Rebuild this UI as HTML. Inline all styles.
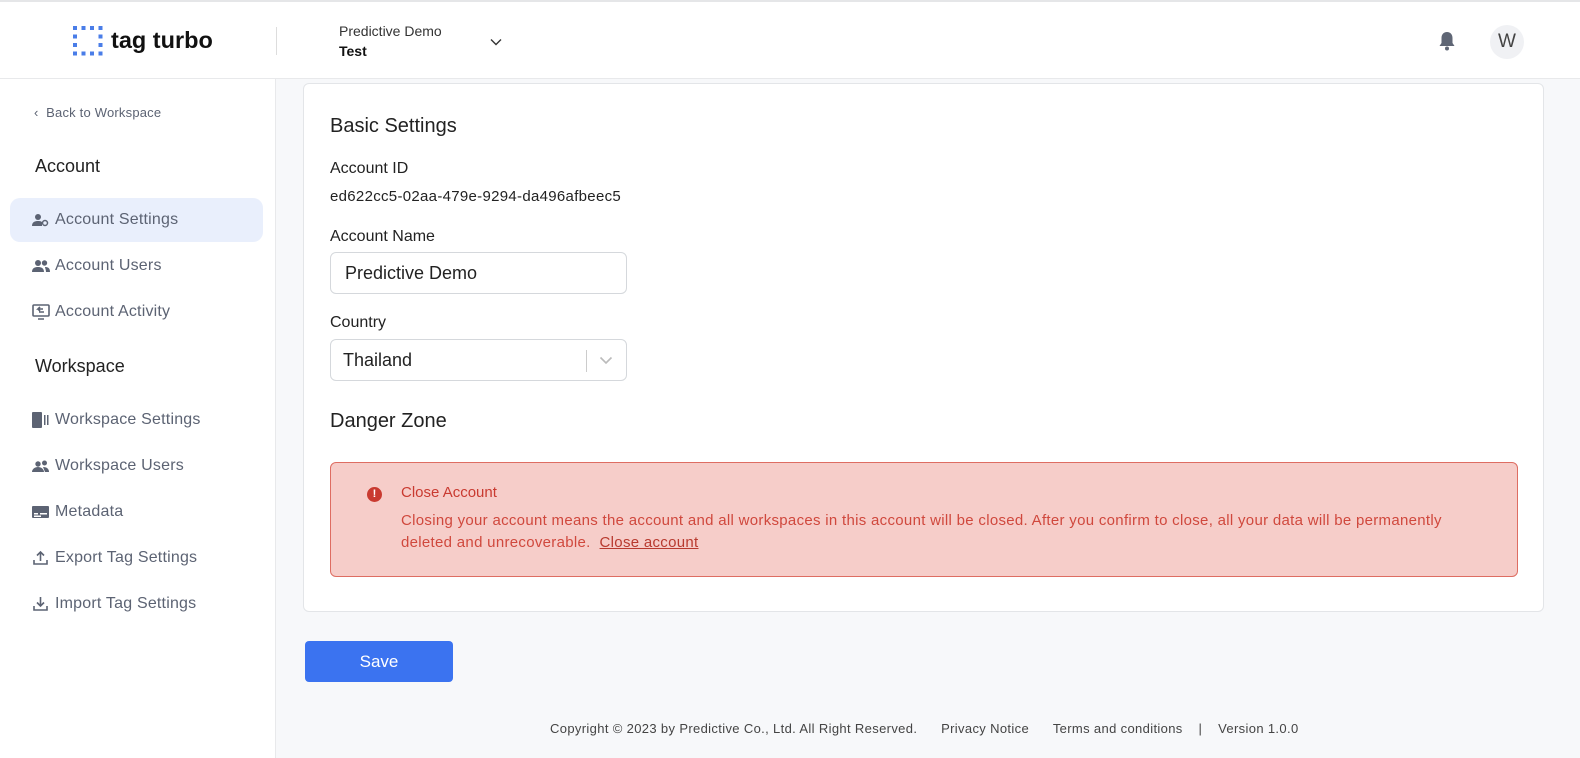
<!DOCTYPE html>
<html><head><style>
*{box-sizing:border-box;margin:0;padding:0}
body{width:1580px;height:758px;overflow:hidden;font-family:"Liberation Sans",sans-serif;background:#f7f8fa;position:relative;color:#1f2328}
.hdr{position:absolute;left:0;top:0;width:1580px;height:79px;background:#fff;border-top:2px solid #e5e6e8;border-bottom:1px solid #e8e9eb}
.side{position:absolute;left:0;top:79px;width:276px;height:679px;background:#fff;border-right:1px solid #e8e9eb}
.abs{position:absolute}
.nav{position:absolute;left:10px;width:253px;height:44px;display:flex;align-items:center;padding-left:22px;font-size:16px;letter-spacing:0.2px;color:#5c6373;border-radius:10px}
.nav svg{margin-right:5px}
.card{position:absolute;left:303px;top:83px;width:1241px;height:529px;background:#fff;border:1px solid #e3e5e8;border-radius:6px}
.inp{position:absolute;width:297px;height:42px;border:1px solid #d5d8dc;border-radius:6px;font-size:18px;color:#222;display:flex;align-items:center}
</style></head><body>
<div class="hdr">
 <svg class="abs" style="left:73px;top:24px" width="30" height="30" viewBox="0 0 30 30" fill="#4a7de8">
  <rect x="0" y="0" width="4" height="4"/><rect x="8.5" y="0" width="4" height="4"/><rect x="17" y="0" width="4" height="4"/><rect x="25.5" y="0" width="4" height="4"/>
  <rect x="0" y="8.5" width="4" height="4"/><rect x="25.5" y="8.5" width="4" height="4"/>
  <rect x="0" y="17" width="4" height="4"/><rect x="25.5" y="17" width="4" height="4"/>
  <rect x="0" y="25.5" width="4" height="4"/><rect x="8.5" y="25.5" width="4" height="4"/><rect x="17" y="25.5" width="4" height="4"/><rect x="25.5" y="25.5" width="4" height="4"/>
 </svg>
 <div class="abs" style="left:111px;top:25px;font-size:23.5px;font-weight:bold;color:#111">tag turbo</div>
 <div class="abs" style="left:276px;top:25px;width:1px;height:28px;background:#ddd"></div>
 <div class="abs" style="left:339px;top:21px;font-size:14px;color:#333">Predictive Demo</div>
 <div class="abs" style="left:339px;top:41px;font-size:14px;color:#111;font-weight:bold">Test</div>
 <svg class="abs" style="left:490px;top:36px" width="12" height="8" viewBox="0 0 12 8"><path d="M1 1.5l5 5 5-5" stroke="#333" stroke-width="1.4" fill="none"/></svg>
 <svg class="abs" style="left:1438px;top:29px" width="18" height="20" viewBox="0 0 18 20" fill="#5f6675"><path d="M9 1c-3.5 0-5.5 2.5-5.5 6v5L1.5 15h15l-2-3V7C14.5 3.5 12.5 1 9 1z"/><circle cx="9" cy="17.5" r="2"/></svg>
 <div class="abs" style="left:1490px;top:23px;width:34px;height:34px;border-radius:50%;background:#f0f1f4;font-size:19px;color:#444;text-align:center;line-height:34px">W</div>
</div>
<div class="side">
 <div class="abs" style="left:34px;top:26px;font-size:13px;color:#5c6373;letter-spacing:0.2px">‹&nbsp;&nbsp;Back to Workspace</div>
 <div class="abs" style="left:35px;top:77px;font-size:18px;color:#222">Account</div>
 <div class="nav" style="top:119px;background:#e9effc"><svg width="18" height="14" viewBox="0 0 18 14" fill="#5c6373"><circle cx="6" cy="4" r="3"/><path d="M0 13c0-4 3-5 6-5s3 .5 4 1v4z"/><circle cx="13" cy="10" r="2.5" fill="none" stroke="#5c6373" stroke-width="1.5"/></svg>Account Settings</div>
 <div class="nav" style="top:165px"><svg width="18" height="14" viewBox="0 0 18 14" fill="#5c6373"><circle cx="6" cy="4" r="3"/><circle cx="12.5" cy="4" r="2.7"/><path d="M0 13c0-4 3-5 6-5s6 1 6 5zM13 8c3 0 5 1 5 5h-4c0-2-1-4-1-5z"/></svg>Account Users</div>
 <div class="nav" style="top:211px"><svg width="18" height="16" viewBox="0 0 18 16" fill="none" stroke="#5c6373" stroke-width="1.6"><rect x="1" y="1" width="16" height="11" rx="1"/><path d="M6 15h6M11 5H6l2-2M6 5l2 2M7 8h5"/></svg>Account Activity</div>
 <div class="abs" style="left:35px;top:277px;font-size:18px;color:#222">Workspace</div>
 <div class="nav" style="top:319px"><svg width="18" height="16" viewBox="0 0 18 16" fill="#5c6373"><rect x="0" y="0" width="10" height="16" rx="1"/><rect x="12" y="3" width="1.5" height="10"/><rect x="15" y="3" width="1.5" height="10"/></svg>Workspace Settings</div>
 <div class="nav" style="top:365px"><svg width="18" height="14" viewBox="0 0 18 14" fill="#5c6373"><circle cx="6" cy="5" r="2.7"/><circle cx="12.5" cy="4" r="2.5"/><path d="M0 13c0-3 3-5 6-5s6 2 6 5zM11 8c4 0 6 2 6 5h-4z"/></svg>Workspace Users</div>
 <div class="nav" style="top:411px"><svg width="18" height="14" viewBox="0 0 18 14" fill="#5c6373"><rect x="0" y="1" width="17" height="12" rx="1"/><rect x="2" y="8" width="4" height="1.5" fill="#fff"/><rect x="8" y="8" width="7" height="1.5" fill="#fff"/><rect x="2" y="10.5" width="7" height="1.5" fill="#fff"/></svg>Metadata</div>
 <div class="nav" style="top:457px"><svg width="18" height="16" viewBox="0 0 18 16" fill="none" stroke="#5c6373" stroke-width="1.6"><path d="M2 10v4h13v-4M8.5 11V2M5 5.5l3.5-3.5 3.5 3.5"/></svg>Export Tag Settings</div>
 <div class="nav" style="top:503px"><svg width="18" height="16" viewBox="0 0 18 16" fill="none" stroke="#5c6373" stroke-width="1.6"><path d="M2 10v4h13v-4M8.5 1v9M5 6.5l3.5 3.5 3.5-3.5"/></svg>Import Tag Settings</div>
</div>
<div class="card">
 <div class="abs" style="left:26px;top:31px;font-size:20px;color:#222">Basic Settings</div>
 <div class="abs" style="left:26px;top:76px;font-size:16px;color:#222">Account ID</div>
 <div class="abs" style="left:26px;top:104px;font-size:15px;color:#222;letter-spacing:0.3px">ed622cc5-02aa-479e-9294-da496afbeec5</div>
 <div class="abs" style="left:26px;top:144px;font-size:16px;color:#222">Account Name</div>
 <div class="inp" style="left:26px;top:168px;padding-left:14px">Predictive Demo</div>
 <div class="abs" style="left:26px;top:230px;font-size:16px;color:#222">Country</div>
 <div class="inp" style="left:26px;top:255px;padding-left:12px">Thailand
  <div class="abs" style="left:255px;top:10px;width:1px;height:22px;background:#ccc"></div>
  <svg class="abs" style="left:268px;top:16px" width="14" height="9" viewBox="0 0 14 9"><path d="M1.5 1.5l5.5 5.5 5.5-5.5" stroke="#bbb" stroke-width="1.6" fill="none"/></svg>
 </div>
 <div class="abs" style="left:26px;top:326px;font-size:20px;color:#222">Danger Zone</div>
 <div class="abs" style="left:26px;top:378px;width:1188px;height:115px;background:#f6cdc9;border:1px solid #de6d62;border-radius:6px">
  <div class="abs" style="left:36px;top:24px;width:15px;height:15px;border-radius:50%;background:#c93a30;color:#fff;font-size:11px;font-weight:bold;text-align:center;line-height:15px">!</div>
  <div class="abs" style="left:70px;top:21px;font-size:15px;color:#c93a30">Close Account</div>
  <div class="abs" style="left:70px;top:47px;width:1080px;font-size:15px;line-height:22px;letter-spacing:0.3px;color:#d0483d">Closing your account means the account and all workspaces in this account will be closed. After you confirm to close, all your data will be permanently deleted and unrecoverable.&nbsp; <u style="color:#b83a2f">Close account</u></div>
 </div>
</div>
<div class="abs" style="left:305px;top:641px;width:148px;height:41px;background:#3b73f0;border-radius:4px;color:#fff;font-size:17px;text-align:center;line-height:41px">Save</div>
<div class="abs" style="left:550px;top:721px;font-size:13px;color:#444;white-space:nowrap;letter-spacing:0.35px">Copyright © 2023 by Predictive Co., Ltd. All Right Reserved.&nbsp;&nbsp;&nbsp;&nbsp;&nbsp;&nbsp;Privacy Notice&nbsp;&nbsp;&nbsp;&nbsp;&nbsp;&nbsp;Terms and conditions&nbsp;&nbsp;&nbsp;&nbsp;|&nbsp;&nbsp;&nbsp;&nbsp;Version 1.0.0</div>
</body></html>
